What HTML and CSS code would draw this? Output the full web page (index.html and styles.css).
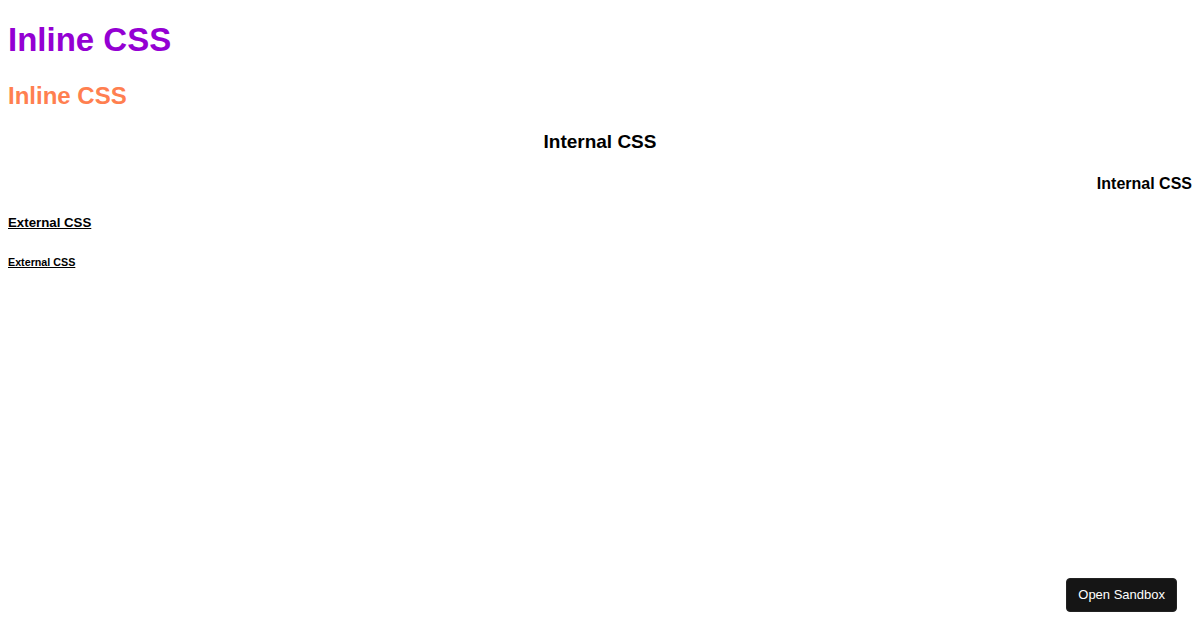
FILE: index.html
```html
<!DOCTYPE html>
<html lang="en">
<head>
<meta charset="utf-8">
<title>CSS types</title>
<link rel="stylesheet" href="styles.css">
</head>
<body>
<h1 class="violet">Inline CSS</h1>
<h2 class="coral">Inline CSS</h2>
<h3 class="centered">Internal CSS</h3>
<h4 class="right">Internal CSS</h4>
<h5 class="underlined">External CSS</h5>
<h6 class="underlined small">External CSS</h6>
<button class="open-sandbox" type="button">Open Sandbox</button>
</body>
</html>
```

FILE: styles.css
```css
body {
  font-family: Helvetica, "Liberation Sans", Arial, sans-serif;
  background: #fff;
  color: #000;
}

.violet {
  margin: 13px 0 24px;
  color: darkviolet;
  font-size: 33px;
  line-height: 37px;
}

.coral {
  margin: 0 0 21px;
  color: coral;
  font-size: 24px;
  line-height: 28px;
}

.centered {
  margin: 0 0 22px;
  font-size: 19px;
  line-height: 22px;
  text-align: center;
}

.right {
  margin: 0 0 22px;
  font-size: 16px;
  line-height: 18px;
  text-align: right;
}

.underlined {
  margin: 0 0 25px;
  text-decoration: underline;
  line-height: 16px;
}

.small {
  line-height: 12px;
}

.open-sandbox {
  position: fixed;
  right: 23px;
  bottom: 18px;
  padding: 8px 11px;
  border: 1px solid #222;
  border-radius: 4px;
  background: #151515;
  color: #fff;
  font-family: "Liberation Sans", Arial, sans-serif;
  font-size: 13px;
  line-height: 16px;
}
```
